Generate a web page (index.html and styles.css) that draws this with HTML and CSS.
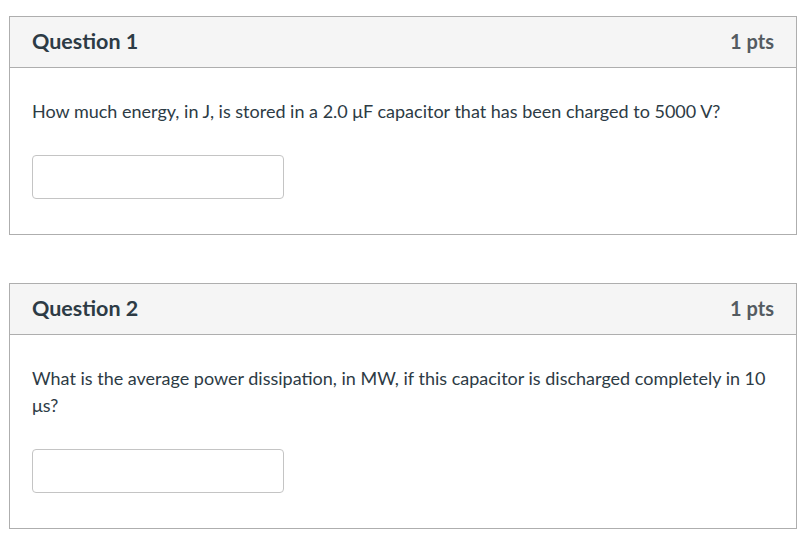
FILE: index.html
```html
<!DOCTYPE html>
<html lang="en">
<head>
<meta charset="utf-8">
<title>Quiz</title>
<link rel="stylesheet" href="styles.css">
</head>
<body>
<div class="page">
  <div class="question">
    <div class="q-header">
      <h2 class="q-title">Question 1</h2>
      <span class="q-points">1 pts</span>
    </div>
    <div class="q-body">
      <p class="q-text">How much energy, in J, is stored in a 2.0 μF capacitor that has been charged to 5000 V?</p>
      <input class="q-input" type="text" aria-label="Answer">
    </div>
  </div>
  <div class="question">
    <div class="q-header">
      <h2 class="q-title">Question 2</h2>
      <span class="q-points">1 pts</span>
    </div>
    <div class="q-body">
      <p class="q-text">What is the average power dissipation, in MW, if this capacitor is discharged completely in 10 μs?</p>
      <input class="q-input" type="text" aria-label="Answer">
    </div>
  </div>
</div>
</body>
</html>
```

FILE: styles.css
```css
html, body {
  margin: 0;
  padding: 0;
  background: #ffffff;
}
body {
  font-family: Lato, "Liberation Sans", sans-serif;
  color: #2d3b45;
}
.page {
  padding: 16px 5px 0 9px;
  display: flex;
  flex-direction: column;
  gap: 48px;
}
.question {
  width: 786px;
  border: 1px solid #aeaeae;
  background: #ffffff;
}
.q-header {
  box-sizing: border-box;
  display: flex;
  align-items: center;
  justify-content: space-between;
  height: 51px;
  padding: 0 22px 3px 22px;
  background: #f5f5f5;
  border-bottom: 1px solid #aeaeae;
}
.q-title {
  margin: 0;
  font-size: 21.5px;
  font-weight: 700;
  color: #2d3b45;
}
.q-points {
  font-size: 20px;
  font-weight: 700;
  color: #545b61;
}
.q-body {
  padding: 30px 22px 35px 22px;
  display: flex;
  flex-direction: column;
  align-items: flex-start;
  gap: 30px;
}
.q-text {
  margin: 0;
  font-size: 18px;
  line-height: 27px;
  color: #2d3b45;
}
.q-input {
  box-sizing: border-box;
  width: 252px;
  height: 44px;
  margin: 0;
  border: 1px solid #c4c4c4;
  border-radius: 4px;
  background: #ffffff;
  font-family: inherit;
  font-size: 16px;
}
```
